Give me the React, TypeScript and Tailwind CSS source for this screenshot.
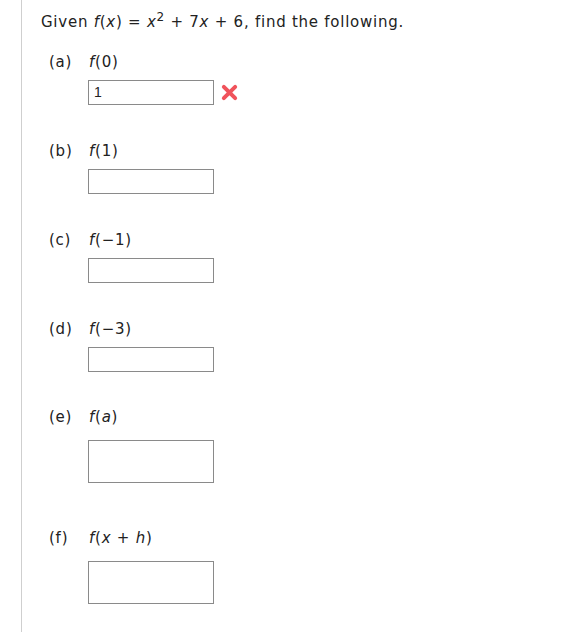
import React from "react";

const F = ({ children }: { children: React.ReactNode }) => <i>{children}</i>;

function Part({
  label,
  expr,
  value,
  tall,
  wrong,
  top,
  gap,
}: {
  label: string;
  expr: React.ReactNode;
  value?: string;
  tall?: boolean;
  wrong?: boolean;
  top: string;
  gap: string;
}) {
  return (
    <div className={top}>
      <div className="flex h-[20px] items-center">
        <span className="w-[40px]">({label})</span>
        <span>{expr}</span>
      </div>
      <div className={`flex items-center pl-[39px] ${gap}`}>
        <div
          className={`w-[126px] border border-[#8a8a8a] bg-white ${tall ? "h-[43px]" : "h-[25px]"} flex items-center px-[5px]`}
        >
          {value && (
            <span
              className="text-[14px] tracking-normal text-[#222]"
              style={{ fontFamily: '"Liberation Sans", Arial, sans-serif' }}
            >
              {value}
            </span>
          )}
        </div>
        {wrong && (
          <svg width="17" height="17" viewBox="0 0 18 18" className="ml-[7px]">
            <path d="M3 3 L15 15 M15 3 L3 15" stroke="#f0535b" strokeWidth="4.2" strokeLinecap="round" />
          </svg>
        )}
      </div>
    </div>
  );
}

export default function App() {
  return (
    <div
      className="h-[632px] w-[573px] bg-white text-[15px] tracking-[0.75px] text-[#222]"
      style={{ fontFamily: '"DejaVu Sans", Verdana, sans-serif' }}
    >
      <div className="ml-[21px] h-full border-l border-[#cfcfcf] pl-[19px] pt-[12px]">
        <div className="flex h-[20px] items-center">
          <span>
            Given <F>f</F>(<F>x</F>) = <F>x</F>
            <sup className="text-[12px]">2</sup> + 7<F>x</F> + 6, find the following.
          </span>
        </div>
        <div className="pl-[8px]">
          <Part label="a" expr={<><F>f</F>(0)</>} value="1" wrong top="mt-[20px]" gap="mt-[8px]" />
          <Part label="b" expr={<><F>f</F>(1)</>} top="mt-[36px]" gap="mt-[8px]" />
          <Part label="c" expr={<><F>f</F>(−1)</>} top="mt-[36px]" gap="mt-[8px]" />
          <Part label="d" expr={<><F>f</F>(−3)</>} top="mt-[36px]" gap="mt-[8px]" />
          <Part label="e" expr={<><F>f</F>(<F>a</F>)</>} tall top="mt-[35px]" gap="mt-[13px]" />
          <Part label="f" expr={<><F>f</F>(<F>x</F> + <F>h</F>)</>} tall top="mt-[45px]" gap="mt-[13px]" />
        </div>
      </div>
    </div>
  );
}
